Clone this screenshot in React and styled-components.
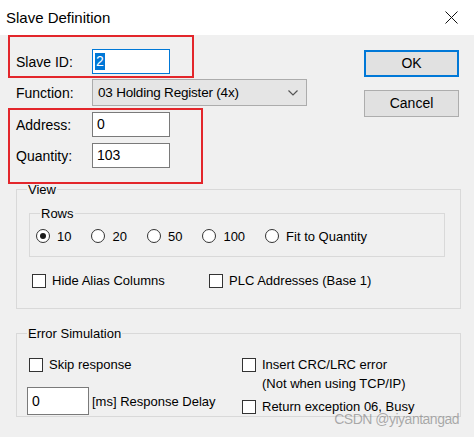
import React from 'react';
import styled, { createGlobalStyle } from 'styled-components';

const GlobalStyle = createGlobalStyle`
  html, body {
    margin: 0;
    padding: 0;
    background: #f0f0f0;
  }
  body {
    font-family: "Liberation Sans", Arial, sans-serif;
  }
`;

const Window = styled.div`
  position: relative;
  width: 474px;
  height: 437px;
  overflow: hidden;
  background: #f0f0f0;
  color: #000;
  font-family: "Liberation Sans", Arial, sans-serif;
  font-size: 13px;
  line-height: 15px;
`;

const TitleBar = styled.div`
  height: 35px;
  box-sizing: border-box;
  padding: 0 16px 0 6px;
  background: #fff;
  display: flex;
  align-items: center;
  justify-content: space-between;
`;

const Title = styled.div`
  font-size: 15px;
  line-height: 18px;
`;

const TopSection = styled.div`
  display: flex;
  height: 149px;
  padding: 0 15px 0 8px;
`;

const LeftCol = styled.div`
  display: flex;
  flex-direction: column;
  align-items: flex-start;
`;

const RedBox = styled.div`
  position: relative;
  z-index: 1;
  box-sizing: border-box;
  width: ${p => p.$w}px;
  height: ${p => p.$h}px;
  margin-top: ${p => p.$mt || 0}px;
  padding: ${p => p.$pt}px 0 0 6px;
  border: 2px solid #e3262b;
  display: flex;
  flex-direction: column;
  gap: 6px;
`;

const FieldRow = styled.div`
  display: flex;
  align-items: center;
  margin: ${p => p.$mt || 0}px 0 0 ${p => p.$ml || 0}px;
`;

const Label = styled.div`
  width: 76px;
  font-size: 14px;
  line-height: 16px;
`;

const TextBox = styled.div`
  box-sizing: border-box;
  width: ${p => p.$w}px;
  height: ${p => p.$h}px;
  padding-left: ${p => (p.$focused ? 2 : 4)}px;
  border: 1px solid ${p => (p.$focused ? '#0078d7' : '#7a7a7a')};
  background: #fff;
  display: flex;
  align-items: center;
  font-size: 14px;
`;

const Selected = styled.span`
  padding: 0 1px;
  line-height: 17px;
  background: #0078d7;
  color: #fff;
`;

const Select = styled.div`
  box-sizing: border-box;
  width: 215px;
  height: 27px;
  padding: 0 8px 0 5px;
  border: 1px solid #acacac;
  background: #e5e5e5;
  display: flex;
  align-items: center;
  justify-content: space-between;
  font-size: 13.5px;
  letter-spacing: -0.2px;
`;

const ButtonCol = styled.div`
  margin-left: auto;
  padding-top: 15px;
  display: flex;
  flex-direction: column;
  gap: 13px;
`;

const Button = styled.div`
  box-sizing: border-box;
  width: 95px;
  height: 27px;
  border: ${p => (p.$default ? '2px solid #0078d7' : '1px solid #adadad')};
  background: #e1e1e1;
  display: flex;
  align-items: center;
  justify-content: center;
  font-size: 14px;
`;

const Group = styled.fieldset`
  min-width: 0;
  margin: ${p => p.$m};
  padding: ${p => p.$pad};
  border: 1px solid #d9d9d9;
`;

const Legend = styled.legend`
  padding: 0 1px;
  margin-left: ${p => p.$ml || 0}px;
  font-size: 13px;
  line-height: 15px;
`;

const RadioRow = styled.div`
  display: flex;
  align-items: center;
  gap: 20px;
  height: 16px;
`;

const Option = styled.label`
  display: flex;
  align-items: ${p => (p.$top ? 'flex-start' : 'center')};
  gap: 6px;
  width: ${p => (p.$w ? `${p.$w}px` : 'auto')};
  margin: ${p => p.$mt || 0}px 0 0 ${p => p.$ml || 0}px;
  line-height: ${p => p.$lh || 15}px;
`;

const RadioDot = styled.span`
  box-sizing: border-box;
  width: 14px;
  height: 14px;
  flex: none;
  border: 1px solid #333;
  border-radius: 50%;
  background: #fff;
  display: flex;
  align-items: center;
  justify-content: center;
  margin-right: 1px;

  &::after {
    content: '';
    width: 6px;
    height: 6px;
    border-radius: 50%;
    background: ${p => (p.$checked ? '#1a1a1a' : 'transparent')};
  }
`;

const CheckBox = styled.span`
  box-sizing: border-box;
  width: 14px;
  height: 14px;
  flex: none;
  border: 1px solid #333;
  background: #fff;
  margin-top: ${p => p.$mt || 0}px;
`;

const CheckRow = styled.div`
  display: flex;
  align-items: center;
  margin-top: 16px;
  padding-left: 3px;
`;

const ErrorGrid = styled.div`
  display: grid;
  grid-template-columns: 215px 1fr;
  align-items: start;
`;

const Stack = styled.div`
  display: flex;
  flex-direction: column;
`;

const DelayRow = styled.div`
  display: flex;
  align-items: center;
  gap: 3px;
  margin-top: 13px;
`;

const Watermark = styled.div`
  position: absolute;
  right: 15px;
  top: 414px;
  font-size: 14px;
  line-height: 11px;
  letter-spacing: -0.5px;
  color: rgba(120, 120, 120, 0.6);
  white-space: nowrap;
`;

const CloseIcon = () => (
  <svg width="13" height="13" viewBox="0 0 13 13">
    <path d="M0.5 0.5 L12.5 12.5 M12.5 0.5 L0.5 12.5" stroke="#111" strokeWidth="1" fill="none" />
  </svg>
);

const Chevron = () => (
  <svg width="10" height="6" viewBox="0 0 10 6">
    <polyline points="0.5,0.5 5,5 9.5,0.5" stroke="#555" strokeWidth="1.2" fill="none" />
  </svg>
);

const rows = [
  { label: '10', checked: true },
  { label: '20' },
  { label: '50' },
  { label: '100' },
  { label: 'Fit to Quantity' },
];

export default function App() {
  return (
    <Window>
      <GlobalStyle />
      <TitleBar>
        <Title>Slave Definition</Title>
        <CloseIcon />
      </TitleBar>

      <TopSection>
        <LeftCol>
          <RedBox $w={186} $h={43} $pt={12}>
            <FieldRow>
              <Label>Slave ID:</Label>
              <TextBox $w={78} $h={25} $focused>
                <Selected>2</Selected>
              </TextBox>
            </FieldRow>
          </RedBox>

          <FieldRow $mt={1} $ml={8}>
            <Label>Function:</Label>
            <Select>
              <span>03 Holding Register (4x)</span>
              <Chevron />
            </Select>
          </FieldRow>

          <RedBox $w={195} $h={76} $pt={2} $mt={2}>
            <FieldRow>
              <Label>Address:</Label>
              <TextBox $w={78} $h={25}>0</TextBox>
            </FieldRow>
            <FieldRow>
              <Label>Quantity:</Label>
              <TextBox $w={78} $h={25}>103</TextBox>
            </FieldRow>
          </RedBox>
        </LeftCol>

        <ButtonCol>
          <Button $default>OK</Button>
          <Button>Cancel</Button>
        </ButtonCol>
      </TopSection>

      <Group $m="-2px 13px 0 16px" $pad="9px 15px 20px 12px">
        <Legend $ml={-2}>View</Legend>
        <Group $m="0" $pad="7px 10px 12px 6px">
          <Legend $ml={4}>Rows</Legend>
          <RadioRow>
            {rows.map(r => (
              <Option key={r.label}>
                <RadioDot $checked={r.checked} />
                {r.label}
              </Option>
            ))}
          </RadioRow>
        </Group>
        <CheckRow>
          <Option $w={177}>
            <CheckBox />
            Hide Alias Columns
          </Option>
          <Option>
            <CheckBox />
            PLC Addresses (Base 1)
          </Option>
        </CheckRow>
      </Group>

      <Group $m="17px 13px 0 16px" $pad="14px 13px 1px 10px">
        <Legend>Error Simulation</Legend>
        <ErrorGrid>
          <Stack>
            <Option $ml={2} $lh={19}>
              <CheckBox />
              Skip response
            </Option>
            <DelayRow>
              <TextBox $w={62} $h={28}>0</TextBox>
              [ms] Response Delay
            </DelayRow>
          </Stack>
          <Stack>
            <Option $top $lh={19}>
              <CheckBox $mt={3} />
              <span>
                Insert CRC/LRC error
                <br />
                (Not when using TCP/IP)
              </span>
            </Option>
            <Option $mt={7} $lh={14}>
              <CheckBox />
              Return exception 06, Busy
            </Option>
          </Stack>
        </ErrorGrid>
      </Group>

      <Watermark>CSDN @yiyantangad</Watermark>
    </Window>
  );
}
